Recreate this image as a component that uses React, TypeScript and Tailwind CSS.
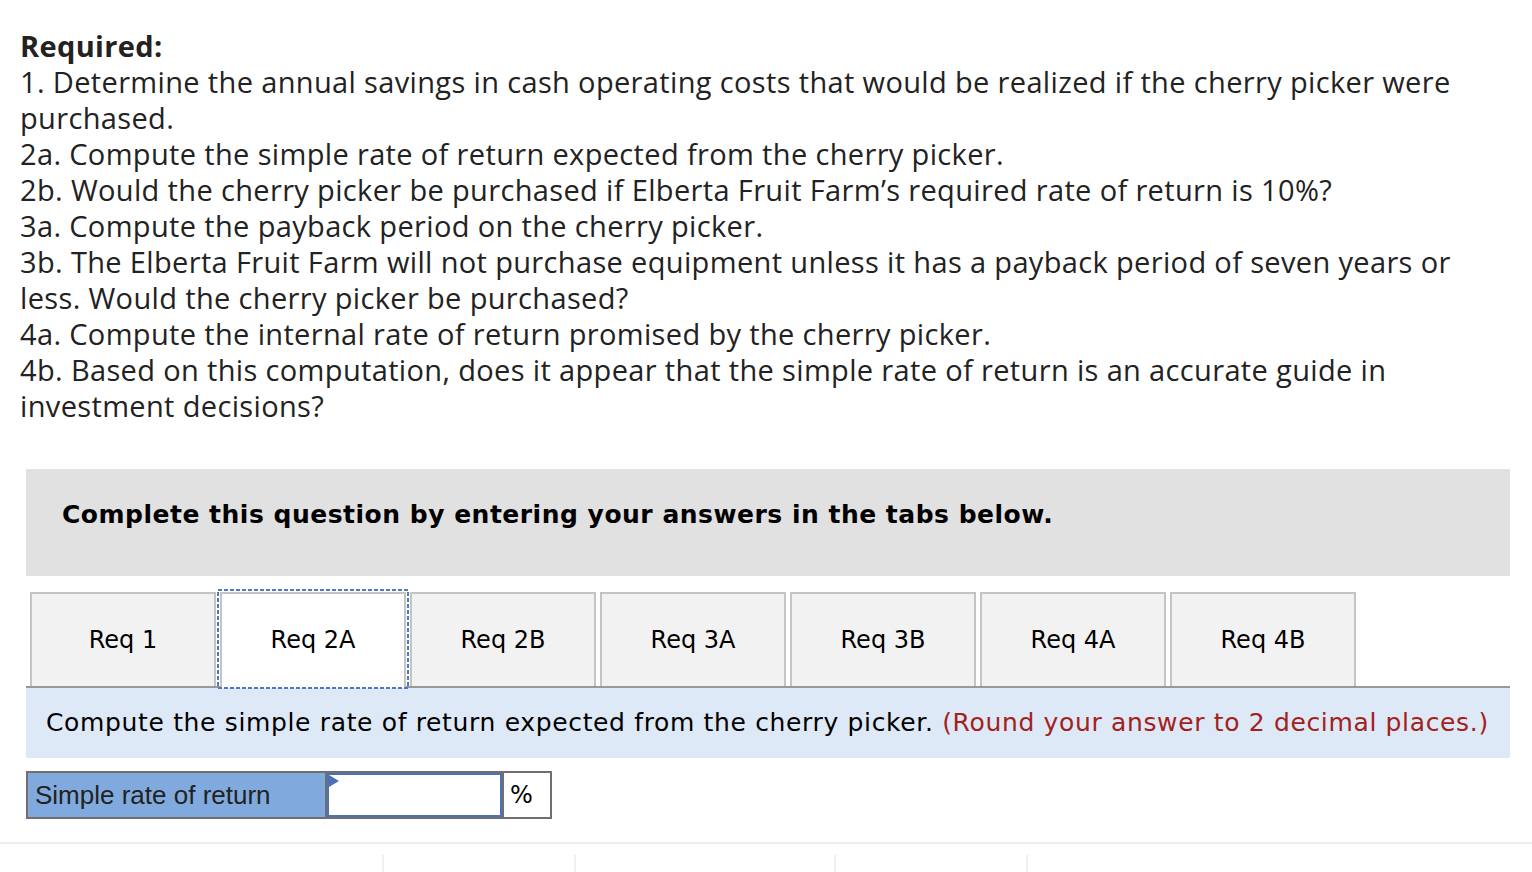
const tabs = ['Req 1', 'Req 2A', 'Req 2B', 'Req 3A', 'Req 3B', 'Req 4A', 'Req 4B']

const lines = [
  '1. Determine the annual savings in cash operating costs that would be realized if the cherry picker were purchased.',
  '2a. Compute the simple rate of return expected from the cherry picker.',
  '2b. Would the cherry picker be purchased if Elberta Fruit Farm’s required rate of return is 10%?',
  '3a. Compute the payback period on the cherry picker.',
  '3b. The Elberta Fruit Farm will not purchase equipment unless it has a payback period of seven years or less. Would the cherry picker be purchased?',
  '4a. Compute the internal rate of return promised by the cherry picker.',
  '4b. Based on this computation, does it appear that the simple rate of return is an accurate guide in investment decisions?',
]

export default function App() {
  return (
    <div className="w-[1532px] h-[872px] overflow-hidden bg-white">
      <div className="pt-[28px] pl-[20px] pr-[40px] text-[29px] leading-[36px] tracking-[0.35px] text-[#222] font-['Open_Sans',sans-serif]">
        <p className="font-bold">Required:</p>
        {lines.map((l) => (
          <p key={l}>{l}</p>
        ))}
      </div>

      <div className="mt-[45px] ml-[26px] w-[1484px] h-[107px] bg-[#e1e1e1] flex items-center pl-[36px] pb-[16px]">
        <p className="font-['DejaVu_Sans',Verdana,sans-serif] font-bold text-[25px] tracking-[0.5px] text-black">
          Complete this question by entering your answers in the tabs below.
        </p>
      </div>

      <div className="ml-[26px] w-[1484px] mt-[16px]">
        <div className="flex gap-[4px] pl-[4px] font-['DejaVu_Sans',Verdana,sans-serif] text-[24px] text-black">
          {tabs.map((t, i) =>
            i === 1 ? (
              <div
                key={t}
                className="relative z-10 w-[186px] h-[96px] mb-[-2px] border-2 border-b-0 border-[#c4c4c4] bg-white flex items-center justify-center pb-[2px]"
              >
                {t}
                {/* focus ring */}
                <svg className="absolute -left-[5px] -top-[5px] w-[192px] h-[101px]" viewBox="0 0 192 101">
                  <rect x="1" y="1" width="190" height="98" fill="none" stroke="#4a7bc0" strokeWidth="2" strokeDasharray="4 2" />
                </svg>
              </div>
            ) : (
              <div
                key={t}
                className="w-[186px] h-[94px] border-2 border-b-0 border-[#c4c4c4] bg-[#f2f2f2] flex items-center justify-center"
              >
                {t}
              </div>
            ),
          )}
        </div>
        <div className="border-t-2 border-[#999] bg-[#dde9f7] h-[72px] flex items-center pl-[20px] font-['DejaVu_Sans',Verdana,sans-serif] text-[25px] tracking-[0.65px] text-black">
          <p>
            Compute the simple rate of return expected from the cherry picker.{' '}
            <span className="text-[#a3211b]">(Round your answer to 2 decimal places.)</span>
          </p>
        </div>

        <div className="mt-[13px] flex w-[526px] h-[48px] border-2 border-[#6f6f6f]">
          <div className="w-[299px] bg-[#80aadd] border-r-2 border-[#6f6f6f] flex items-center pl-[7px] font-['Liberation_Sans',Arial,sans-serif] text-[26px] text-[#222]">
            Simple rate of return
          </div>
          <div className="relative w-[175px] border-2 border-[#4a72b5] bg-white">
            <svg className="absolute left-0 top-0" width="10" height="12" viewBox="0 0 10 12">
              <polygon points="0,0 10,6 0,12" fill="#4a72b5" />
            </svg>
          </div>
          <div className="flex-1 bg-white border-l-2 border-[#6f6f6f] flex items-center pl-[6px] font-['DejaVu_Sans',Verdana,sans-serif] text-[24px] text-black">
            %
          </div>
        </div>
      </div>

      <div className="mt-[23px] h-[2px] bg-[#eeeeee]" />
      <div className="flex h-[40px] pt-[11px]">
        <div className="w-[382px]" />
        <div className="w-[2px] bg-[#f0f0f0]" />
        <div className="w-[190px]" />
        <div className="w-[2px] bg-[#f0f0f0]" />
        <div className="w-[258px]" />
        <div className="w-[2px] bg-[#f0f0f0]" />
        <div className="w-[190px]" />
        <div className="w-[2px] bg-[#f0f0f0]" />
      </div>
    </div>
  )
}
